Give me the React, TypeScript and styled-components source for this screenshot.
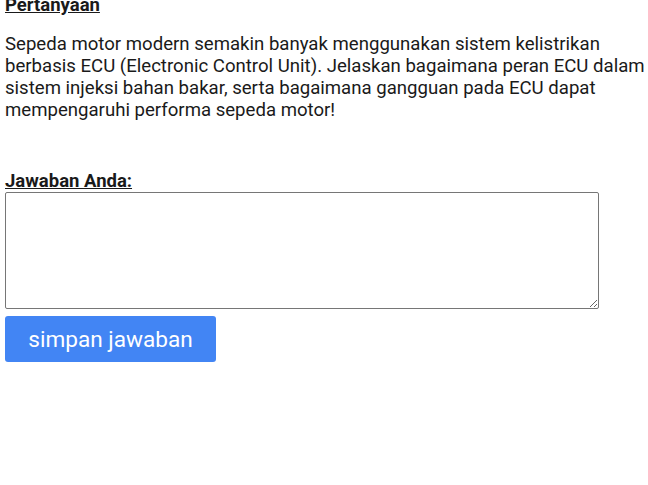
import React from 'react';
import styled, { createGlobalStyle } from 'styled-components';

const GlobalStyle = createGlobalStyle`
  html, body {
    margin: 0;
    padding: 0;
    background: #fff;
  }
  body {
    font-family: Roboto, "Noto Sans", Arial, sans-serif;
    color: #1a1a1a;
  }
`;

const Page = styled.div`
  padding: 0 0 0 5px;
  margin-top: -6px;
`;

const Heading = styled.h3`
  font-size: 18.5px;
  font-weight: 700;
  text-decoration: underline;
  margin: 0;
  line-height: 22px;
`;

const Question = styled.p`
  font-size: 18.6px;
  line-height: 22px;
  margin: 17px 0 0;
`;

const AnswerLabel = styled.label`
  display: block;
  font-size: 18.5px;
  font-weight: 700;
  text-decoration: underline;
  line-height: 22px;
  margin-top: 49px;
`;

const AnswerBox = styled.textarea`
  display: block;
  box-sizing: border-box;
  width: 594px;
  height: 117px;
  border: 1px solid #767676;
  border-radius: 2px;
  margin: 0;
  padding: 4px;
  font-family: inherit;
  font-size: 16px;
`;

const SaveButton = styled.button`
  display: block;
  margin-top: 7px;
  width: 211px;
  height: 46px;
  background: #4285f4;
  color: #fff;
  border: none;
  border-radius: 3px;
  font-family: Roboto, "Noto Sans", Arial, sans-serif;
  font-size: 22.6px;
  padding: 0;
`;

export default function App() {
  return (
    <>
      <GlobalStyle />
      <Page>
        <Heading>Pertanyaan</Heading>
        <Question>
          Sepeda motor modern semakin banyak menggunakan sistem kelistrikan
          berbasis ECU (Electronic Control Unit). Jelaskan bagaimana peran ECU
          dalam sistem injeksi bahan bakar, serta bagaimana gangguan pada ECU
          dapat mempengaruhi performa sepeda motor!
        </Question>
        <AnswerLabel htmlFor="jawaban">Jawaban Anda:</AnswerLabel>
        <AnswerBox id="jawaban" />
        <SaveButton>simpan jawaban</SaveButton>
      </Page>
    </>
  );
}
